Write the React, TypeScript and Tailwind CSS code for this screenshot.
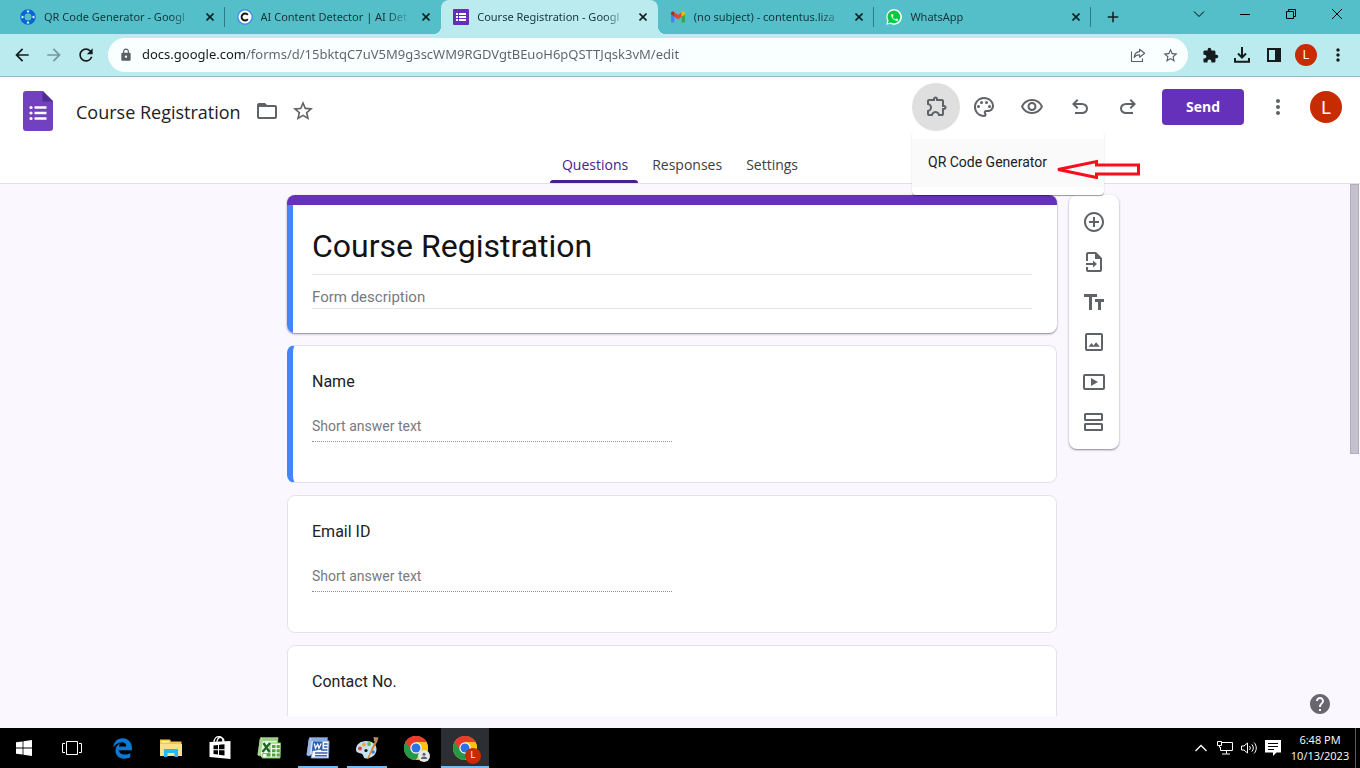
import React, { useState } from "react";
import {
  MdAdd,
  MdAddCircleOutline,
  MdArrowBack,
  MdArrowForward,
  MdExtension,
  MdFolderOpen,
  MdHelp,
  MdLock,
  MdMoreVert,
  MdOutlinePalette,
  MdOutlineVisibility,
  MdPhone,
  MdRefresh,
  MdStarBorder,
} from "react-icons/md";
import { FaEdgeLegacy } from "react-icons/fa6";

interface BrowserTab {
  id: number;
  title: string;
  icon: React.ReactNode;
  separator: boolean;
}

interface Question {
  id: string;
  title: string;
  selected: boolean;
}

const browserTabs: BrowserTab[] = [
  { id: 1, title: "QR Code Generator - Googl", icon: <QrFavicon />, separator: true },
  { id: 2, title: "AI Content Detector | AI Det", icon: <DetectorFavicon />, separator: false },
  { id: 3, title: "Course Registration - Googl", icon: <FormsFavicon />, separator: false },
  { id: 4, title: "(no subject) - contentus.liza", icon: <GmailFavicon />, separator: true },
  { id: 5, title: "WhatsApp", icon: <WhatsAppFavicon />, separator: true },
];

const questions: Question[] = [
  { id: "name", title: "Name", selected: true },
  { id: "email", title: "Email ID", selected: false },
  { id: "contact", title: "Contact No.", selected: false },
];

/* ---------- favicons ---------- */

function QrFavicon() {
  return (
    <svg viewBox="0 0 16 16" className="size-4 shrink-0">
      <circle cx="8" cy="8" r="5.5" fill="none" stroke="#0b63d6" strokeWidth="4.6" />
      <circle cx="8" cy="8" r="3.4" fill="#55bfc9" />
      <path d="M8 .8v2.4M8 12.8v2.4M.8 8h2.4M12.8 8h2.4" stroke="#2f8dff" strokeWidth="3" />
      <g fill="#fff">
        <circle cx="8" cy="2.6" r="1" />
        <circle cx="8" cy="13.4" r="1" />
        <circle cx="2.6" cy="8" r="1" />
        <circle cx="13.4" cy="8" r="1" />
      </g>
    </svg>
  );
}

function DetectorFavicon() {
  return (
    <svg viewBox="0 0 16 16" className="size-4 shrink-0">
      <circle cx="8" cy="8" r="7.2" fill="#fff" stroke="#3f8ff0" strokeWidth="1.4" />
      <path d="M10.8 5.8A3.500 3.500 0 1 0 10.800 10.200" fill="none" stroke="#10131c" strokeWidth="1.900" />
    </svg>
  );
}

function FormsFavicon() {
  return (
    <svg viewBox="0 0 16 16" className="size-4 shrink-0">
      <rect width="16" height="16" rx="1" fill="#6330b9" />
      <path d="M3 4h2v2H3zM6 4h7v2H6zM3 7h2v2H3zM6 7h7v2H6zM3 10h2v2H3zM6 10h7v2H6z" fill="#fff" />
    </svg>
  );
}

function GmailFavicon() {
  return (
    <svg viewBox="0 0 16 16" className="size-4 shrink-0">
      <path d="M1 5l3.400 2.500V13.500H2a1 1 0 0 1-1-1z" fill="#4285f4" />
      <path d="M15 5l-3.400 2.500V13.500H14a1 1 0 0 0 1-1z" fill="#34a853" />
      <path d="M4.400 3.200L8 6l3.600-2.800v4.500L8 10.400 4.400 7.700z" fill="#ea4335" />
      <path d="M1 4.200C1 2.600 2.800 2 4 2.900l.4.3v4.500L1 5.200z" fill="#c5221f" />
      <path d="M15 4.200c0-1.600-1.800-2.200-3-1.300l-.4.3v4.500L15 5.200z" fill="#fbbc04" />
    </svg>
  );
}

function WhatsAppFavicon() {
  return (
    <span className="relative flex size-4 shrink-0 items-center justify-center">
      <svg viewBox="0 0 16 16" className="absolute inset-0">
        <path d="M.2 15.8l1.1-4A7.8 7.8 0 1 1 4.3 14.8z" fill="#fff" />
        <path d="M1.8 14.2l.8-2.7A6.4 6.4 0 1 1 4.8 13.5z" fill="#04c941" />
      </svg>
      <MdPhone size={9} className="relative text-white" />
    </span>
  );
}

/* ---------- line icons ---------- */

function AddonIcon() {
  return (
    <svg viewBox="0 -960 960 960" className="size-6" fill="currentColor">
      <path d="M352-120H200q-33 0-56.5-23.5T120-200v-152q48 0 84-30.5t36-77.5q0-47-36-77.5T120-568v-152q0-33 23.500-56.500T200-800h160q0-42 29-71t71-29q42 0 71 29t29 71h160q33 0 56.500 23.500T800-720v160q42 0 71 29t29 71q0 42-29 71t-71 29v160q0 33-23.500 56.500T720-120H568q0-50-31.500-85T460-240q-45 0-76.500 35T352-120Zm-152-80h85q24-66 77-93t98-27q45 0 98 27t77 93h85v-240h80q8 0 14-6t6-14q0-8-6-14t-14-6h-80v-240H480v-80q0-8-6-14t-14-6q-8 0-14 6t-6 14v80H200v88q54 20 87 67t33 105q0 57-33 104t-87 68v88Z" />
    </svg>
  );
}

function UndoIcon() {
  return (
    <svg viewBox="0 -960 960 960" className="size-6" fill="currentColor">
      <path d="M280-200v-80h284q63 0 109.5-40T720-420q0-60-46.5-100T564-560H312l104 104-56 56-200-200 200-200 56 56-104 104h252q97 0 166.5 63T800-420q0 94-69.5 157T564-200H280Z" />
    </svg>
  );
}

function RedoIcon() {
  return (
    <svg viewBox="0 -960 960 960" className="size-6" fill="currentColor">
      <path d="M396-200q-97 0-166.5-63T160-420q0-94 69.5-157T396-640h252L544-744l56-56 200 200-200 200-56-56 104-104H396q-63 0-109.5 40T240-420q0 60 46.5 100T396-280h284v80H396Z" />
    </svg>
  );
}

function ImportIcon() {
  return (
    <svg viewBox="0 0 24 24" className="size-6" fill="currentColor">
      <path d="M4 11V4a2 2 0 0 1 2-2h8l6 6v12a2 2 0 0 1-2 2H6a2 2 0 0 1-2-2v-3h2v3h12V9h-5V4H6v7z" />
      <path d="M4 13h7v-2.5l4 3.5-4 3.5V15H4z" />
    </svg>
  );
}

function TextIcon() {
  return (
    <svg viewBox="0 0 24 24" className="size-6" fill="currentColor">
      <path d="M2 4v3h5v13h3V7h5V4zM22 9h-9v3h3v8h3v-8h3z" />
    </svg>
  );
}

function ImageIcon() {
  return (
    <svg viewBox="0 0 24 24" className="size-6">
      <rect x="4" y="4" width="16" height="16" rx="1" fill="none" stroke="currentColor" strokeWidth="2" />
      <path d="M6.5 16.8l3-3.8 2 2.4 2.6-3.2 3.8 4.6z" fill="currentColor" />
    </svg>
  );
}

function VideoIcon() {
  return (
    <svg viewBox="0 0 24 24" className="size-6">
      <rect x="2" y="5" width="20" height="14" rx="1" fill="none" stroke="currentColor" strokeWidth="2" />
      <path d="M9 8l7 4-7 4z" fill="currentColor" />
    </svg>
  );
}

function SectionIcon() {
  return (
    <svg viewBox="0 0 24 24" className="size-6" fill="none" stroke="currentColor" strokeWidth="2">
      <rect x="3" y="4" width="17" height="6" rx=".5" />
      <rect x="3" y="14" width="17" height="6" rx=".5" />
    </svg>
  );
}

function ShareIcon() {
  return (
    <svg viewBox="0 0 16 16" className="size-4" fill="none" stroke="currentColor" strokeWidth="1.1">
      <path d="M1.5 4.500v10h11v-3" />
      <path d="M9.600 2.200l5 4-5 4V7.800C7 7.800 5.200 8.800 4.200 10.600 4.400 7.400 6.400 4.800 9.600 4.600z" strokeLinejoin="round" />
    </svg>
  );
}

function DownloadIcon() {
  return (
    <svg viewBox="0 0 16 16" className="size-4" fill="none" stroke="currentColor" strokeWidth="2">
      <path d="M8 0v10M4 6.5l4 4 4-4M1 11v3.8h14V11" />
    </svg>
  );
}

function SidePanelIcon() {
  return (
    <svg viewBox="0 0 14 14" className="size-3.5">
      <path d="M0 0h14v14H0zM2 2v10h6V2z" fill="currentColor" fillRule="evenodd" />
    </svg>
  );
}

function FormsLogo() {
  return (
    <svg viewBox="0 0 30 40" className="h-10 w-[30px] shrink-0">
      <path d="M3 0h17l10 10v27a3 3 0 0 1-3 3H3a3 3 0 0 1-3-3V3a3 3 0 0 1 3-3z" fill="#7141bf" />
      <path d="M19.5 0L30 10.5H19.5z" fill="#4f2d92" />
      <g fill="#fff">
        <circle cx="8" cy="16.5" r="1.6" />
        <circle cx="8" cy="22" r="1.6" />
        <circle cx="8" cy="27.5" r="1.6" />
        <path d="M11.5 15.3H23.5v2.4H11.5zM11.5 20.8H23.5v2.4H11.5zM11.5 26.3H23.5v2.4H11.5z" />
      </g>
    </svg>
  );
}

/* ---------- browser chrome ---------- */

function TabStrip() {
  return (
    <div className="flex h-[34px] bg-[#55bfc9] pl-2">
      <div className="flex min-w-0 max-w-[1083px] flex-1">
        {browserTabs.map((tab) => {
          const active = tab.id === 3;
          return (
            <div
              key={tab.id}
              className={`relative flex min-w-0 flex-1 items-center pr-[7px] pl-3 ${active ? "rounded-t-lg bg-[#bcebef]" : ""}`}
            >
              {tab.icon}
              <span className="ml-2 flex-1 overflow-hidden mask-r-from-85% whitespace-nowrap font-[Noto_Sans,sans-serif] text-[11px] text-[#12343a]">
                {tab.title}
              </span>
              <button aria-label="Close tab" className="ml-2 flex size-4 items-center justify-center text-[#0f2023]">
                <svg viewBox="0 0 8 8" className="size-2" stroke="currentColor" strokeWidth="1.6">
                  <path d="M.5.5l7 7M7.5.5l-7 7" />
                </svg>
              </button>
              {tab.separator && <span className="absolute top-[7px] right-0 h-5 w-px bg-[#2d7d86]" />}
              {active && (
                <>
                  <span className="absolute bottom-0 -left-2 size-2 bg-[radial-gradient(circle_at_0_0,#55bfc9_8px,#bcebef_8px)]" />
                  <span className="absolute -right-2 bottom-0 size-2 bg-[radial-gradient(circle_at_100%_0,#55bfc9_8px,#bcebef_8px)]" />
                </>
              )}
            </div>
          );
        })}
      </div>
      <button aria-label="New tab" className="flex w-11 items-center justify-center text-[#0f2023]">
        <MdAdd size={18} stroke="currentColor" />
      </button>
      <div className="ml-auto flex h-7 items-center text-black">
        <button aria-label="Search tabs" className="flex w-[46px] justify-center">
          <svg viewBox="0 0 12 12" className="size-3" fill="none" stroke="currentColor">
            <path d="M1 3.5l5 5 5-5" />
          </svg>
        </button>
        <button aria-label="Minimize" className="flex w-[46px] justify-center">
          <svg viewBox="0 0 10 10" className="size-2.5" stroke="currentColor">
            <path d="M0 5.5h10" />
          </svg>
        </button>
        <button aria-label="Restore" className="flex w-[46px] justify-center">
          <svg viewBox="0 0 10 10" className="size-2.5" fill="none" stroke="currentColor">
            <path d="M.5 2.5h7v7h-7zM2.5 2.5v-2h7v7h-2" />
          </svg>
        </button>
        <button aria-label="Close window" className="flex w-[46px] justify-center">
          <svg viewBox="0 0 10 10" className="size-2.5" stroke="currentColor">
            <path d="M0 0l10 10M10 0L0 10" />
          </svg>
        </button>
      </div>
    </div>
  );
}

function BrowserToolbar() {
  return (
    <div className="flex h-[43px] items-center border-b border-[#8fbcc0] bg-[#bcebef] px-1.5 text-[#161c1e]">
      <button aria-label="Back" className="flex w-8 justify-center">
        <MdArrowBack size={20} />
      </button>
      <button aria-label="Forward" className="flex w-8 justify-center text-[#75979b]">
        <MdArrowForward size={20} />
      </button>
      <button aria-label="Reload" className="flex w-8 justify-center">
        <MdRefresh size={20} />
      </button>
      <div className="mx-1.5 flex h-[34px] min-w-0 flex-1 items-center rounded-full bg-[#f9ffff] pl-2.5 text-[#5a5f62]">
        <MdLock size={14} className="mx-px shrink-0" />
        {/* the host is darker than the path */}
        <input
          aria-label="Address"
          defaultValue="docs.google.com/forms/d/15bktqC7uV5M9g3scWM9RGDVgtBEuoH6pQSTTJqsk3vM/edit"
          className="ml-2 min-w-0 flex-1 bg-[linear-gradient(90deg,#16191a_103px,#5c6366_103px)] bg-clip-text font-[Noto_Sans,sans-serif] text-[13px] text-transparent outline-none"
        />
        <button aria-label="Share" className="flex w-8 justify-center">
          <ShareIcon />
        </button>
        <button aria-label="Bookmark" className="mr-0.5 flex w-8 justify-center">
          <MdStarBorder size={17} />
        </button>
      </div>
      <button aria-label="Extensions" className="flex w-8 justify-center">
        <MdExtension size={17} />
      </button>
      <button aria-label="Downloads" className="flex w-8 justify-center">
        <DownloadIcon />
      </button>
      <button aria-label="Side panel" className="flex w-8 justify-center">
        <SidePanelIcon />
      </button>
      <button aria-label="Profile" className="flex w-8 justify-center">
        <span className="flex size-[22px] items-center justify-center rounded-full bg-[#c62c00] font-[Roboto,sans-serif] text-xs text-white">L</span>
      </button>
      <button aria-label="Browser menu" className="flex w-8 justify-center">
        <MdMoreVert size={20} />
      </button>
    </div>
  );
}

/* ---------- form editor ---------- */

function AddonMenu() {
  return (
    <div className="absolute top-12 left-0 z-20 w-48 rounded bg-white py-2 shadow-[0_1px_1px_rgba(0,0,0,0.4)]">
      <button className="flex h-12 w-full items-center bg-[#fafafa] px-4 pb-0.5 text-sm whitespace-nowrap text-[#202124]">
        QR Code Generator
      </button>
      {/* pointer to the add-on entry */}
      <svg viewBox="0 0 86 20" className="absolute top-7 left-[142px] h-5 w-[86px]">
        <path d="M4 10.500L42.500 2.500v3.500h42v9H42.500v3.500z" fill="none" stroke="#fb0d1b" strokeWidth="3" />
      </svg>
    </div>
  );
}

function FormHeader() {
  const [tab, setTab] = useState("Questions");

  return (
    <header className="border-b border-[#e1e0e6] bg-white">
      <div className="flex h-[71px] items-start pt-1.5 pr-[18px] pl-[23px] text-[#5f6368]">
        <div className="flex h-14 items-center">
          <FormsLogo />
          <input
            aria-label="Document title"
            defaultValue="Course Registration"
            className="ml-[23px] h-8 w-[168px] pt-0.5 font-[Open_Sans,sans-serif] text-lg text-[#202124] outline-none"
          />
          <button aria-label="Move to folder" className="ml-[11px] flex size-6 items-center justify-center">
            <MdFolderOpen size={24} />
          </button>
          <button aria-label="Star" className="ml-3 flex size-6 items-center justify-center">
            <MdStarBorder size={24} />
          </button>
        </div>
        <div className="ml-auto flex h-12 items-center">
          <div className="relative">
            <button aria-label="Add-ons" className="flex size-12 items-center justify-center rounded-full bg-[#dfdfdf]">
              <AddonIcon />
            </button>
            <AddonMenu />
          </div>
          <button aria-label="Customize theme" className="flex size-12 items-center justify-center">
            <MdOutlinePalette size={24} />
          </button>
          <button aria-label="Preview" className="flex size-12 items-center justify-center">
            <MdOutlineVisibility size={24} />
          </button>
          <button aria-label="Undo" className="flex size-12 items-center justify-center">
            <UndoIcon />
          </button>
          <button aria-label="Redo" className="flex size-12 items-center justify-center">
            <RedoIcon />
          </button>
          <button className="ml-2.5 h-9 w-[82px] rounded bg-[#6531bb] font-[Open_Sans,sans-serif] text-sm font-bold text-white">Send</button>
          <button aria-label="More" className="ml-2.5 flex size-12 items-center justify-center">
            <MdMoreVert size={24} />
          </button>
          <button aria-label="Account" className="ml-2 flex size-8 items-center justify-center rounded-full bg-[#c62c00] pt-0.5 text-lg text-white">
            L
          </button>
        </div>
      </div>
      <div role="tablist" className="flex h-[35px] justify-center">
        {["Questions", "Responses", "Settings"].map((name) => (
          <button
            key={name}
            role="tab"
            aria-selected={tab === name}
            onClick={() => setTab(name)}
            className={`relative px-3 pb-0.5 font-[Open_Sans,sans-serif] text-sm font-medium ${tab === name ? "text-[#48218f]" : "text-[#3c4043]"}`}
          >
            {name}
            {tab === name && <span className="absolute right-0.5 bottom-0 left-0 h-[3px] rounded-t-sm bg-[#48218f]" />}
          </button>
        ))}
      </div>
    </header>
  );
}

function TitleCard() {
  return (
    <section className="relative overflow-hidden rounded-lg border-t-[10px] border-[#6531bb] bg-white px-[25px] pt-[19px] pb-6 shadow-[0_1px_2px_rgba(60,50,80,0.6)]">
      <span className="absolute top-0 bottom-0 left-0 w-1.5 bg-[#4285ff]" />
      <input
        aria-label="Form title"
        defaultValue="Course Registration"
        className="block h-[51px] w-full border-b border-[#e4e4e6] pb-1.5 text-[32px] text-[#131316] outline-none"
      />
      <input
        aria-label="Form description"
        placeholder="Form description"
        className="mt-2.5 block h-6 w-full border-b border-[#e4e4e6] text-[15px] placeholder:text-[#767a7f] outline-none"
      />
    </section>
  );
}

function QuestionCard({ question }: { question: Question }) {
  return (
    <section
      className={`rounded-lg border border-[#e4e1ea] bg-white pt-6 pr-6 pb-10 ${
        question.selected ? "border-l-[6px] border-l-[#4285ff] pl-[19px]" : "pl-6"
      }`}
    >
      <label htmlFor={question.id} className="block text-base text-[#202124]">
        {question.title}
      </label>
      <input
        id={question.id}
        placeholder="Short answer text"
        className="mt-4 block h-8 w-[360px] border-b border-dotted border-[#8d9094] text-sm placeholder:text-[#767a7f] outline-none"
      />
    </section>
  );
}

function SideTools() {
  const tools = [
    { label: "Add question", icon: <MdAddCircleOutline size={24} /> },
    { label: "Import questions", icon: <ImportIcon /> },
    { label: "Add title and description", icon: <TextIcon /> },
    { label: "Add image", icon: <ImageIcon /> },
    { label: "Add video", icon: <VideoIcon /> },
    { label: "Add section", icon: <SectionIcon /> },
  ];

  return (
    <div className="ml-3 flex w-[50px] flex-col items-center self-start rounded-lg bg-white py-[7px] text-[#5f6368] shadow-[0_1px_2px_rgba(60,50,80,0.6)]">
      {tools.map((tool) => (
        <button key={tool.label} aria-label={tool.label} className="flex size-10 items-center justify-center">
          {tool.icon}
        </button>
      ))}
    </div>
  );
}

/* ---------- taskbar ---------- */

function ChromeLogo() {
  return (
    <svg viewBox="0 0 24 24" className="size-6">
      <circle cx="12" cy="12" r="12" fill="#fbc116" />
      <path d="M12 12L1.6 6A12 12 0 0 1 22.4 6z" fill="#ea3b2e" />
      <path d="M12 12L1.6 6A12 12 0 0 0 12 24l5.2-9z" fill="#279847" />
      <path d="M12 6h10.4A12 12 0 0 1 12 24l5.2-9z" fill="#fbc116" />
      <path d="M1.6 6A12 12 0 0 1 22.4 6H12L7 14z" fill="#ea3b2e" />
      <circle cx="12" cy="12" r="5.7" fill="#fff" />
      <circle cx="12" cy="12" r="4.5" fill="#2a72e8" />
    </svg>
  );
}

function StartIcon() {
  return (
    <svg viewBox="0 0 16 16" className="size-4" fill="#fff">
      <path d="M0 2.3l6.6-.9v6.2H0zM7.4 1.3L16 0v7.6H7.4zM0 8.4h6.6v6.2L0 13.7zM7.4 8.4H16V16l-8.6-1.3z" />
    </svg>
  );
}

function TaskViewIcon() {
  return (
    <svg viewBox="0 0 20 14" className="h-3.5 w-5" fill="none" stroke="#fff">
      <path d="M4.5.5h11v13h-11zM3 2.5H.5v9H3M17 2.5h2.5v9H17" />
    </svg>
  );
}

function FolderIcon() {
  return (
    <svg viewBox="0 0 22 20" className="h-5 w-[22px]">
      <path d="M0 1.5h10l1 2h10.5V18H0z" fill="#f3c74f" />
      <path d="M1.5 3H9v1.5H1.5z" fill="#fff4c4" />
      <path d="M0 6h22v12H0z" fill="#fde08a" />
      <path d="M4 11h14v8h-3.5v-4h-7v4H4z" fill="#23b9f2" />
    </svg>
  );
}

function StoreIcon() {
  return (
    <svg viewBox="0 0 22 24" className="h-6 w-[22px]">
      <path d="M5 6.5C5 2 7.5.7 10 .7S14 3 14 6M8 6C8 3 10 1 12 1.5S15 4 15 6" fill="none" stroke="#fff" strokeWidth="1.3" />
      <path d="M.5 6l21-1v18L.5 21z" fill="#fff" />
      <path d="M4.5 9.5l4.5-.5v4.3H4.5zM10 8.8l5.5-.6v5.1H10zM4.5 14.3H9v4.3l-4.5-.5zM10 14.3h5.5v5.1l-5.5-.6z" fill="#000" />
    </svg>
  );
}

function ExcelIcon() {
  return (
    <svg viewBox="0 0 24 24" className="size-6">
      <path d="M3.5 1.500h17.500l-.5 8L3 20 .8 19z" fill="#e6f4df" stroke="#63ab48" />
      <path d="M5 2h15.500v3H4.500z" fill="#9ed086" />
      <path d="M2.800 3L.8 19l3 .8L6 3z" fill="#a8d894" />
      <path d="M6 6.500h11L14.500 21H4z" fill="#f8fdf5" />
      <path d="M13 7h10.500l-.5 15H5l.5-4.500H13z" fill="#f4fbf0" stroke="#7dbd66" />
      <path d="M15 9h3.500v3H15zM19.700 9h3v3h-3zM15 13.300h3.500v3H15zM19.700 13.300h3v3h-3zM15 17.600h3.500v3H15zM19.700 17.600h3v3h-3zM9.500 17.600h4v3h-4z" fill="#4ca63a" />
      <path d="M6.500 7l6 9M13 7L5.500 16" stroke="#1c6b22" strokeWidth="2.400" />
    </svg>
  );
}

function WordIcon() {
  return (
    <svg viewBox="0 0 24 24" className="size-6">
      <path d="M3.500 1.500h18l-.5 8L3 20 .8 19z" fill="#d9e5f7" stroke="#5579b8" />
      <path d="M5 2h16v3H4.500z" fill="#8faee0" />
      <path d="M2.800 3L.8 19l3 .8L6 3z" fill="#9cb8e6" />
      <path d="M8 5h15l-.5 17H5l1-4.500z" fill="#f7faff" stroke="#7f9fd4" />
      <path d="M18 8h3.500M18 11h3.500M15 14h6.500M9 17h12.500M9 19.800h12" stroke="#3460b4" strokeWidth="1.500" />
      <path d="M7 5.500h9.500v8L6 15z" fill="#2c5cb0" />
      <path d="M8.300 7.500l1.200 4.800 2.200-4 1.200 4 2.300-4.800" stroke="#fff" strokeWidth="1.300" fill="none" />
    </svg>
  );
}

function PaintIcon() {
  return (
    <svg viewBox="0 0 24 24" className="size-6">
      <path d="M11 5c6 0 10.5 3 10.5 8 0 6-5 9.5-10.5 9.500-3 0-2-3-4-4.500S1 17.500 1 13.500C1 8.500 5.500 5 11 5z" fill="#c4e2f3" />
      <circle cx="5" cy="12.5" r="2" fill="#e14a3a" />
      <circle cx="9" cy="8.5" r="1.9" fill="#f1a531" />
      <circle cx="14" cy="8" r="1.9" fill="#5eb647" />
      <circle cx="11" cy="14.5" r="1.6" fill="#10161b" />
      <circle cx="18" cy="16" r="1.8" fill="#3c7fd6" />
      <path d="M20.5 5L12.500 23l3-5.500L21.500 6z" fill="#d9822b" stroke="#d9822b" />
      <path d="M18.500 1l5 .5-1.500 5-3-1.500z" fill="#b98a63" />
    </svg>
  );
}

function Taskbar() {
  const apps = [
    { label: "Edge", icon: <FaEdgeLegacy size={21} className="text-[#0a78d7]" />, open: false },
    { label: "File Explorer", icon: <FolderIcon />, open: false },
    { label: "Store", icon: <StoreIcon />, open: false },
    { label: "Excel", icon: <ExcelIcon />, open: false },
    { label: "Word", icon: <WordIcon />, open: true },
    { label: "Paint", icon: <PaintIcon />, open: true },
  ];

  return (
    <footer className="flex h-10 shrink-0 bg-black text-white">
      <button aria-label="Start" className="flex w-12 items-center justify-center">
        <StartIcon />
      </button>
      <button aria-label="Task view" className="flex w-12 items-center justify-center">
        <TaskViewIcon />
      </button>
      <div className="ml-0.5 flex gap-px">
        {apps.map((app) => (
          <button key={app.label} aria-label={app.label} className="relative flex w-12 items-center justify-center">
            {app.icon}
            {app.open && <span className="absolute inset-x-1 bottom-0 h-0.5 bg-[#76b9ed]" />}
          </button>
        ))}
        <button aria-label="Chrome" className="flex w-12 items-center justify-center">
          <span className="relative">
            <ChromeLogo />
            <svg viewBox="0 0 12 12" className="absolute -right-0.5 -bottom-0.5 size-3">
              <circle cx="6" cy="6" r="6" fill="#e4e7ea" />
              <circle cx="6" cy="4.3" r="1.5" fill="#5f6368" />
              <path d="M3 9c0-2 1.5-2.6 3-2.6S9 7 9 9z" fill="#5f6368" />
            </svg>
          </span>
        </button>
        <button aria-label="Chrome, profile L" className="flex w-12 items-center justify-center border-b-2 border-[#76b9ed] bg-[#2b2f34] pt-0.5">
          <span className="relative">
            <ChromeLogo />
            <span className="absolute -right-1 -bottom-1 flex size-4 items-center justify-center rounded-full bg-[#c62c00] font-[Roboto,sans-serif] text-[9px]">
              L
            </span>
          </span>
        </button>
      </div>
      <div className="ml-auto flex items-center">
        <button aria-label="Hidden icons" className="flex w-6 justify-center">
          <svg viewBox="0 0 12 12" className="size-3" fill="none" stroke="#fff" strokeWidth="1.3">
            <path d="M.5 9L6 3.5 11.5 9" />
          </svg>
        </button>
        <button aria-label="Network" className="flex w-6 justify-center">
          <svg viewBox="0 0 16 14" className="h-3.5 w-4" fill="none" stroke="#fff">
            <path d="M5 1.5h10.5v8H3.5V6M.5.5h4v4h-4zM2.5 4.5v2M9.5 9.5v3M5 13h8" />
          </svg>
        </button>
        <button aria-label="Volume" className="flex w-6 justify-center">
          <svg viewBox="0 0 16 14" className="h-3.5 w-4" fill="none" stroke="#fff">
            <path d="M.5 5v4h2.5l3.5 3V2L3 5zM8.500 5c1 1 1 3 0 4M10.800 3.300c2 2 2 5.400 0 7.400M13 1.500c3 3 3 8 0 11" />
          </svg>
        </button>
        <button aria-label="Notifications" className="flex w-6 justify-center">
          <svg viewBox="0 0 16 16" className="size-4">
            <path d="M0 0h16v12.5h-4.5L8 16v-3.5H0z" fill="#fff" />
            <path d="M3 3.5h10M3 6.5h10M3 9.5h6" stroke="#000" />
          </svg>
        </button>
        <div className="w-[70px] text-center font-[Open_Sans,sans-serif] text-[11px] leading-4">
          <div>6:48 PM</div>
          <div>10/13/2023</div>
        </div>
        <span className="mr-1 h-full w-px bg-[#5a5a5a]" />
      </div>
    </footer>
  );
}

export default function App() {
  return (
    <div className="flex h-screen flex-col bg-[#fbf7ff] font-[Roboto,sans-serif]">
      <TabStrip />
      <BrowserToolbar />
      <FormHeader />

      <main className="relative flex min-h-0 flex-1">
        <div className="mb-3 grid flex-1 grid-cols-[1fr_770px_1fr] overflow-hidden pt-[11px]">
          <div />
          <div className="flex flex-col gap-3">
            <TitleCard />
            {questions.map((question) => (
              <QuestionCard key={question.id} question={question} />
            ))}
          </div>
          <SideTools />
        </div>
        <div className="w-4 pl-1.5">
          <div className="h-[270px] w-[9px] border border-[#b3aeba] bg-[#c5c0ce]" />
        </div>
        <button aria-label="Help" className="absolute right-7 bottom-3 text-[#6a666e]">
          <MdHelp size={24} />
        </button>
      </main>

      <Taskbar />
    </div>
  );
}
